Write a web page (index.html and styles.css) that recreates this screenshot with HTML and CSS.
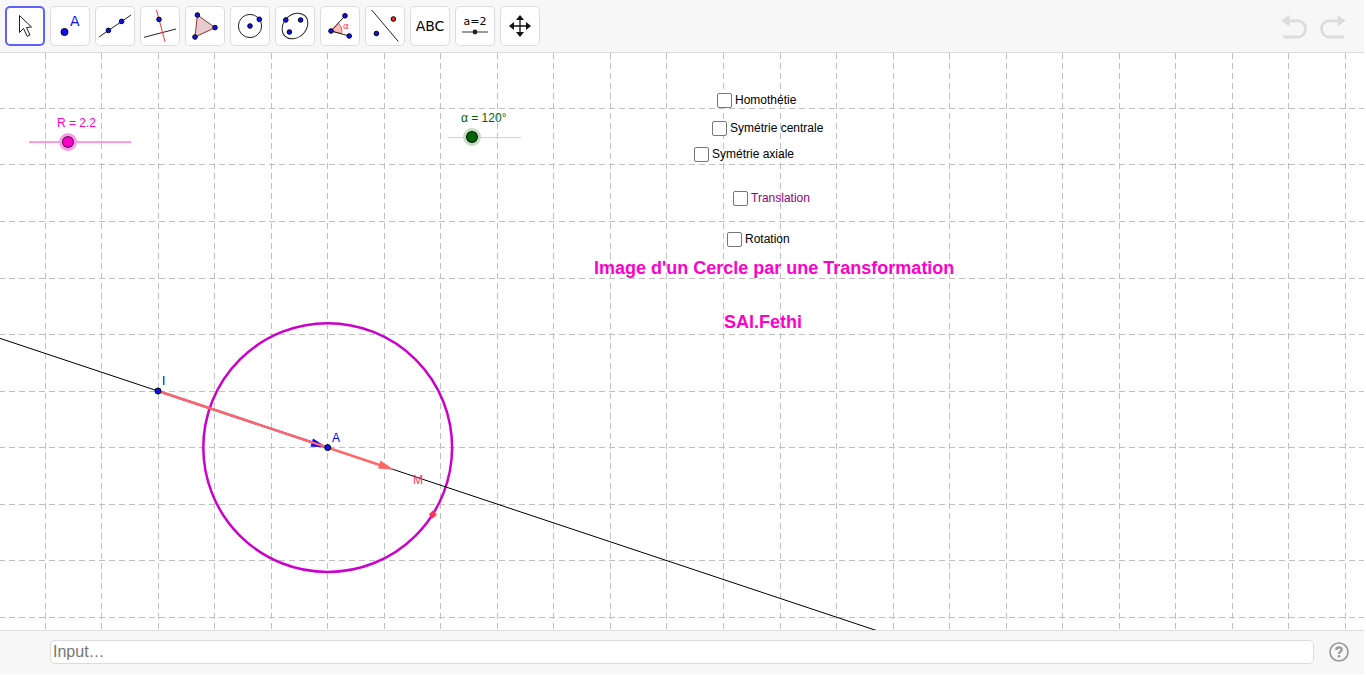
FILE: index.html
```html
<!DOCTYPE html>
<html lang="fr">
<head>
<meta charset="utf-8">
<title>Image d'un Cercle par une Transformation</title>
<link rel="stylesheet" href="styles.css">
</head>
<body>
<div class="app">
  <header class="toolbar">
    <div class="tools">
      <button class="tool selected" aria-label="Move"><svg viewBox="0 0 40 40"><path d="M14.500 9.500V26.500L18.500 22.500L22.200 30.300L25 29L21.500 21.500L26.500 21Z" fill="#fff" stroke="#222"/></svg></button>
      <button class="tool" aria-label="Point"><svg viewBox="0 0 40 40"><circle class="pt" cx="14.500" cy="26" r="3.500"/><text class="point-letter" x="20" y="20">A</text></svg></button>
      <button class="tool" aria-label="Line"><svg viewBox="0 0 40 40"><path class="ln" d="M4 31L36 9"/><circle class="pt" cx="13.400" cy="24.400" r="2.300"/><circle class="pt" cx="26.600" cy="15.400" r="2.300"/></svg></button>
      <button class="tool" aria-label="Perpendicular line"><svg viewBox="0 0 40 40"><path class="ln" d="M4 31.300L36 23"/><path class="ln red" d="M16.500 4L25 35.700"/><circle class="pt" cx="19" cy="13.400" r="2.300"/></svg></button>
      <button class="tool" aria-label="Polygon"><svg viewBox="0 0 40 40"><path d="M12.400 9L30 21.600L10 31Z" fill="#e6cccc" stroke="#993333"/><circle class="pt" cx="12.400" cy="9" r="2.300"/><circle class="pt" cx="30" cy="21.600" r="2.300"/><circle class="pt" cx="10" cy="31" r="2.300"/></svg></button>
      <button class="tool" aria-label="Circle"><svg viewBox="0 0 40 40"><circle class="ln" cx="20" cy="20" r="11.600"/><circle class="pt" cx="20" cy="20" r="2.300"/><circle class="pt" cx="29.300" cy="13.300" r="2.300"/></svg></button>
      <button class="tool" aria-label="Conic"><svg viewBox="0 0 40 40"><ellipse class="ln" cx="20" cy="20" rx="14.200" ry="11.300" transform="rotate(-45 20 20)"/><circle class="pt" cx="10.800" cy="14" r="2.300"/><circle class="pt" cx="25.600" cy="14" r="2.300"/><circle class="pt" cx="14.400" cy="26" r="2.300"/></svg></button>
      <button class="tool" aria-label="Angle"><svg viewBox="0 0 40 40"><path d="M11 25L18.400 17.200A10.800 10.800 0 0 1 21.500 27.600Z" fill="#ffbbbb" stroke="#ff5555"/><path class="ln" d="M25 9.800L11 25L29.300 30"/><circle class="pt" cx="25" cy="9.800" r="2.300"/><circle class="pt" cx="11" cy="25" r="2.300"/><circle class="pt" cx="29.200" cy="30" r="2.300"/><text class="angle-letter" x="23" y="23">α</text></svg></button>
      <button class="tool" aria-label="Reflect"><svg viewBox="0 0 40 40"><path class="ln" d="M6.700 4L33.300 35.500"/><circle class="pt red" cx="28.400" cy="13" r="2.300"/><circle class="pt" cx="11.400" cy="27.500" r="2.300"/></svg></button>
      <button class="tool" aria-label="Text"><svg viewBox="0 0 40 40"><text class="abc" x="20" y="25" text-anchor="middle">ABC</text></svg></button>
      <button class="tool" aria-label="Slider"><svg viewBox="0 0 40 40"><text class="eq" x="20" y="19" text-anchor="middle">a=2</text><path d="M7 26H33" stroke="#666" stroke-width="1.300"/><circle cx="20" cy="26" r="2.400" fill="#222"/></svg></button>
      <button class="tool" aria-label="Move graphics view"><svg viewBox="0 0 40 40"><path d="M20 12V28M12 20H28" stroke="#111" stroke-width="1.300"/><path d="M20 9L24 14H16ZM20 31L24 26H16ZM9 20L14 16V24ZM31 20L26 16V24Z" fill="#111"/></svg></button>
    </div>
    <div class="history">
      <button class="plain" aria-label="Undo"><svg width="28" height="24" viewBox="0 0 28 24"><path d="M0 6.700L8.500 1V12.500Z" fill="#dcdcdc"/><path d="M7 6.800H18A8.300 8.300 0 0 1 18 23H2" fill="none" stroke="#dcdcdc" stroke-width="2.800"/></svg></button>
      <button class="plain" aria-label="Redo"><svg width="28" height="24" viewBox="0 0 28 24"><path d="M28 6.700L19.500 1V12.500Z" fill="#dcdcdc"/><path d="M21 6.800H10A8.300 8.300 0 0 0 10 23H26" fill="none" stroke="#dcdcdc" stroke-width="2.800"/></svg></button>
    </div>
  </header>

  <main class="view">
    <svg class="drawing" aria-label="Construction">
      <path class="grid" d="M45.500 0V2000M101.500 0V2000M158.500 0V2000M214.500 0V2000M271.500 0V2000M327.500 0V2000M384.500 0V2000M440.500 0V2000M497.500 0V2000M553.500 0V2000M610.500 0V2000M666.500 0V2000M723.500 0V2000M780.500 0V2000M836.500 0V2000M893.500 0V2000M949.500 0V2000M1006.500 0V2000M1062.500 0V2000M1119.500 0V2000M1175.500 0V2000M1232.500 0V2000M1288.500 0V2000M1345.500 0V2000"/>
      <path class="grid" d="M-1 55.500H4000M-1 111.500H4000M-1 168.500H4000M-1 225.500H4000M-1 281.500H4000M-1 338.500H4000M-1 394.500H4000M-1 451.500H4000M-1 507.500H4000M-1 564.500H4000"/>
      <circle cx="327.700" cy="394.600" r="124.400" fill="none" stroke="#cc00cc" stroke-width="2.500"/>
      <path d="M-2 284.700L1498 784.700" stroke="#000"/>
      <path d="M158 338L318 391.300" stroke="#00f" stroke-width="2"/>
      <path d="M327 394.500L310.500 393.500L313 385.500Z" fill="#00f"/>
      <path d="M158 338L382 412.700" stroke="#ff6666" stroke-width="2.500"/>
      <path d="M394 416.700L378 415.500L380.500 407.500Z" fill="#ff6666"/>
      <circle class="pt" cx="158" cy="338" r="3"/>
      <circle class="pt" cx="327.700" cy="394.600" r="3"/>
      <path d="M432.800 457.500L436.800 461.500L432.800 465.500L428.800 461.500Z" fill="#ff3355"/>
      <text class="name" x="162" y="332">I</text>
      <text class="name" x="332" y="389">A</text>
      <text class="name moving" x="413" y="431">M</text>
    </svg>

    <div class="slider ratio"><label for="r">R = 2.2</label><input id="r" type="range" min="0" max="5.8" step="0.1" value="2.2"></div>
    <div class="slider angle"><label for="a">α = 120°</label><input id="a" type="range" min="0" max="360" value="120"></div>

    <label class="check homothetie"><input type="checkbox">Homothétie</label>
    <label class="check centrale"><input type="checkbox">Symétrie centrale</label>
    <label class="check axiale"><input type="checkbox">Symétrie axiale</label>
    <label class="check translation"><input type="checkbox">Translation</label>
    <label class="check rotation"><input type="checkbox">Rotation</label>

    <h1 class="caption title">Image d'un Cercle par une Transformation</h1>
    <p class="caption author">SAI.Fethi</p>
  </main>

  <footer class="inputbar">
    <input class="command" type="text" placeholder="Input…" aria-label="Input">
    <button class="plain" aria-label="Help"><svg width="20" height="20" viewBox="0 0 20 20"><circle cx="10" cy="10" r="9" fill="none" stroke="#999" stroke-width="1.700"/><path d="M7.300 8C7.300 6.300 8.400 5.400 10 5.400S12.700 6.400 12.700 7.800C12.700 9.700 10 9.800 10 12" fill="none" stroke="#999" stroke-width="2.200"/><circle cx="10" cy="14.300" r="1.300" fill="#999"/></svg></button>
  </footer>
</div>
</body>
</html>
```
FILE: styles.css
```css
* {
  box-sizing: border-box;
}

body {
  margin: 0;
  background: #fff;
  color: #000;
  font: 12px/16px "Liberation Sans", Arial, sans-serif;
}

.app {
  display: flex;
  flex-direction: column;
  height: 100vh;
  padding: 0 2px 1px 0;
}

.toolbar {
  display: flex;
  flex: none;
  justify-content: space-between;
  padding: 6px 18px 6px 5px;
  background: #f7f7f7;
  border-bottom: 1px solid #dcdcdc;
}

.tools {
  display: flex;
  gap: 5px;
}

.tool {
  width: 40px;
  height: 40px;
  padding: 0;
  border: 0;
  border-radius: 5px;
  background: #fff;
  box-shadow: inset 0 0 0 1px #dcdcdc;
}

.tool.selected {
  box-shadow: inset 0 0 0 2px #6161ff;
}

.tool svg,
.plain svg {
  display: block;
}

.pt {
  fill: #1010ff;
  stroke: #000;
}

.pt.red {
  fill: #ff2222;
}

.ln {
  fill: none;
  stroke: #222;
}

.ln.red {
  stroke: #ff3333;
}

.point-letter {
  font: 14px "DejaVu Sans", sans-serif;
  fill: #1010ff;
}

.angle-letter {
  font: 9px "DejaVu Sans", sans-serif;
  fill: #ff3333;
}

.abc {
  font: 14px "DejaVu Sans", sans-serif;
}

.eq {
  font: 11px "DejaVu Sans", sans-serif;
}

.history {
  display: flex;
  align-items: center;
  gap: 9px;
}

.history svg {
  overflow: visible;
}

.plain {
  padding: 0;
  border: 0;
  background: none;
}

.view {
  position: relative;
  flex: 1;
  min-height: 0;
  overflow: hidden;
}

.drawing {
  display: block;
  width: 100%;
  height: 100%;
}

.grid {
  fill: none;
  stroke: #c0c0c0;
  stroke-dasharray: 6 4;
}

.name {
  font-size: 12px;
  fill: #0000e0;
}

.name.moving {
  fill: #ff3355;
}

.slider,
.check,
.caption {
  position: absolute;
}

.slider {
  display: flex;
  flex-direction: column;
}

.slider input {
  height: 18px;
  margin: 0;
  appearance: none;
}

.slider input::-webkit-slider-thumb {
  appearance: none;
  width: 18px;
  height: 18px;
  border: 3px solid;
  border-radius: 50%;
}

.ratio {
  top: 62px;
  left: 20px;
  color: #ff00cc;
}

.ratio label {
  margin-left: 37px;
}

.ratio input {
  width: 120px;
  margin-top: 2px;
  background: linear-gradient(#ff99eb, #ff99eb) center / 102px 2px no-repeat;
}

.ratio input::-webkit-slider-thumb {
  border-color: #ff99eb;
  background: #ff00cc;
  box-shadow: inset 0 0 0 1px #222;
}

.angle {
  top: 57px;
  left: 439px;
  color: #006400;
}

.angle label {
  margin-left: 22px;
}

.angle input {
  width: 91px;
  margin-top: 2px;
  background: linear-gradient(#c6dbc6, #c6dbc6) center / 73px 1px no-repeat;
}

.angle input::-webkit-slider-thumb {
  border-color: #c6dbc6;
  background: #006400;
  box-shadow: inset 0 0 0 1px #000;
}

.check {
  display: flex;
  align-items: center;
  gap: 3px;
}

.check input {
  width: 15px;
  height: 15px;
  margin: 0;
  appearance: none;
  background: #fff;
  border: 1px solid #777;
  border-radius: 2px;
}

.homothetie {
  top: 39px;
  left: 717px;
}

.centrale {
  top: 67px;
  left: 712px;
}

.axiale {
  top: 93px;
  left: 694px;
}

.translation {
  top: 137px;
  left: 733px;
  color: #990077;
}

.rotation {
  top: 178px;
  left: 727px;
}

.caption {
  margin: 0;
  color: #ff00cc;
  font-size: 18px;
  font-weight: bold;
  line-height: 24px;
  white-space: nowrap;
}

.title {
  top: 203px;
  left: 594px;
}

.author {
  top: 257px;
  left: 724px;
}

.inputbar {
  display: flex;
  flex: none;
  align-items: center;
  gap: 15px;
  padding: 9px 15px 10px 50px;
  background: #f7f7f7;
  border-top: 1px solid #dcdcdc;
}

.command {
  flex: 1;
  min-width: 0;
  height: 24px;
  padding: 0 2px;
  border: 1px solid #dcdcdc;
  border-radius: 5px;
  background: #fff;
  color: #222;
  font: 16px "Liberation Sans", Arial, sans-serif;
}

.command::placeholder {
  color: #757575;
}
```
